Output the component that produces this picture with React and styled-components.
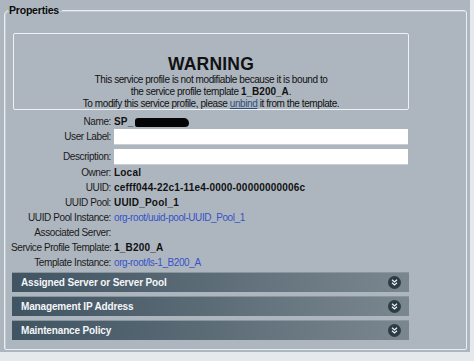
import { Fragment } from "react";
import styled, { createGlobalStyle } from "styled-components";

const Global = createGlobalStyle`
  html, body {
    margin: 0;
    padding: 0;
    background: #e6e9ec;
  }
  body {
    font-family: "Liberation Sans", Arial, sans-serif;
    font-size: 10px;
    color: #111;
  }
`;

const Page = styled.div`
  width: 470px;
  height: 352px;
  background: #adb6bf;
  padding: 4px 0 0 4px;
  box-sizing: border-box;
`;

const Fieldset = styled.fieldset`
  margin: 0;
  width: 463px;
  height: 346px;
  box-sizing: border-box;
  border: 1px solid #e9eef2;
  border-radius: 5px 3px 2px 2px;
  padding: 17px 0 0 8px;
  box-shadow: inset 1px 1px 0 #c2c9cf;
`;

const Legend = styled.legend`
  font-weight: bold;
  font-size: 10.5px;
  letter-spacing: -0.2px;
  padding: 0 3px 0 1px;
  margin-left: -5px;
  color: #0c0c0c;
`;

const WarningBox = styled.div`
  width: 396px;
  height: 77px;
  box-sizing: border-box;
  border: 1px solid #eef2f5;
  border-radius: 2px;
  text-align: center;
  padding-top: 20px;
`;

const WarningTitle = styled.div`
  font-size: 17.5px;
  font-weight: bold;
  line-height: 20px;
  letter-spacing: 0.2px;
`;

const WarningLine = styled.div`
  line-height: 12px;
  font-size: 10px;
  letter-spacing: -0.42px;
  b {
    letter-spacing: 0;
  }
`;

const Link = styled.a`
  color: ${(p) => (p.$muted ? "#2f4f78" : "#3652c8")};
  text-decoration: ${(p) => (p.$muted ? "underline" : "none")};
  letter-spacing: -0.42px;
`;

const Form = styled.div`
  display: grid;
  grid-template-columns: 100px 1fr;
  column-gap: 3px;
  margin-left: -2px;
  margin-top: 5px;
  align-items: start;
`;

const Label = styled.div`
  text-align: right;
  white-space: nowrap;
  font-size: 10px;
  letter-spacing: -0.4px;
  color: #1a1a1a;
  height: ${(p) => p.$h || 15}px;
  line-height: ${(p) => p.$h || 15}px;
  margin-bottom: ${(p) => p.$gap || 0}px;
`;

const Value = styled.div`
  font-weight: ${(p) => (p.$plain ? "normal" : "bold")};
  font-size: 10px;
  letter-spacing: ${(p) => (p.$plain ? 0 : 0.2)}px;
  white-space: nowrap;
  height: ${(p) => p.$h || 15}px;
  line-height: ${(p) => p.$h || 15}px;
  display: flex;
  align-items: center;
`;

const Input = styled.div`
  width: 294px;
  height: 16px;
  margin-bottom: ${(p) => p.$gap || 0}px;
  background: #fff;
  border-bottom: 1px solid #c8ced3;
  box-sizing: border-box;
`;

const Redacted = styled.span`
  display: inline-block;
  width: 54px;
  height: 9px;
  background: #050505;
  border-radius: 3px 5px 4px 2px;
  margin-left: 1px;
`;

const Bars = styled.div`
  display: flex;
  flex-direction: column;
  gap: 4px;
  margin-left: -1px;
  margin-top: 2px;
`;

const Bar = styled.div`
  width: 397px;
  height: 20px;
  box-sizing: border-box;
  display: flex;
  align-items: center;
  justify-content: space-between;
  padding: 0 8px 0 9px;
  background: linear-gradient(to right, #405462 0%, #5c6c77 50%, #7b878f 100%);
  border-top: 1px solid #8a969e;
  color: #f4f6f8;
  font-weight: bold;
  font-size: 10px;
  letter-spacing: -0.15px;
`;

const Chevron = styled.span`
  width: 13px;
  height: 13px;
  border-radius: 50%;
  background: #2b3c46;
  display: flex;
  align-items: center;
  justify-content: center;
`;

const ChevronIcon = () => (
  <svg width="7" height="7" viewBox="0 0 7 7">
    <path d="M1 0.8 L3.5 3 L6 0.8 M1 3.8 L3.5 6 L6 3.8" fill="none" stroke="#f0f4f6" strokeWidth="1.2" />
  </svg>
);

const rows = [
  ["Owner:", "Local"],
  ["UUID:", "cefff044-22c1-11e4-0000-00000000006c"],
  ["UUID Pool:", "UUID_Pool_1"],
  ["UUID Pool Instance:", <Link>org-root/uuid-pool-UUID_Pool_1</Link>, true],
  ["Associated Server:", ""],
  ["Service Profile Template:", "1_B200_A"],
  ["Template Instance:", <Link>org-root/ls-1_B200_A</Link>, true],
];

const sections = ["Assigned Server or Server Pool", "Management IP Address", "Maintenance Policy"];

export default function App() {
  return (
    <>
      <Global />
      <Page>
        <Fieldset>
          <Legend>Properties</Legend>
          <WarningBox>
            <WarningTitle>WARNING</WarningTitle>
            <WarningLine>This service profile is not modifiable because it is bound to</WarningLine>
            <WarningLine>
              the service profile template <b>1_B200_A</b>.
            </WarningLine>
            <WarningLine>
              To modify this service profile, please <Link $muted>unbind</Link> it from the template.
            </WarningLine>
          </WarningBox>
          <Form>
            <Label $h={14}>Name:</Label>
            <Value $h={14}>
              SP_<Redacted />
            </Value>
            <Label $h={16} $gap={4}>User Label:</Label>
            <Input $gap={4} />
            <Label $h={16}>Description:</Label>
            <Input />
            {rows.map(([label, value, plain]) => (
              <Fragment key={label}>
                <Label>{label}</Label>
                <Value $plain={plain}>{value}</Value>
              </Fragment>
            ))}
          </Form>
          <Bars>
            {sections.map((s) => (
              <Bar key={s}>
                {s}
                <Chevron>
                  <ChevronIcon />
                </Chevron>
              </Bar>
            ))}
          </Bars>
        </Fieldset>
      </Page>
    </>
  );
}
